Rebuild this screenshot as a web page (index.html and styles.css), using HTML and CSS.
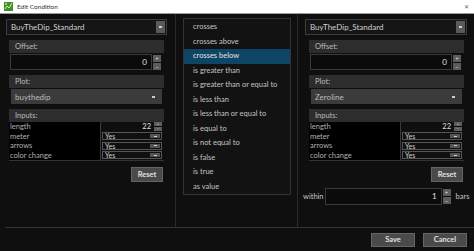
FILE: index.html
```html
<!DOCTYPE html>
<html lang="en">
<head>
    <meta charset="UTF-8">
    <title>Edit Condition</title>
    <link rel="stylesheet" href="styles.css">
</head>
<body>
    <div class="window">
        <header class="titlebar">
            <svg class="app-icon" width="9" height="9" viewBox="0 0 9 9">
                <rect width="9" height="9" fill="#3f8f2f"/>
                <path d="M1 7 L3 4 L5 6 L8 1" stroke="#d8f0a0" stroke-width="1" fill="none"/>
                <rect x="1" y="1" width="2" height="2" fill="#9fd36a"/>
            </svg>
            <span class="title">Edit Condition</span>
            <span class="close">&#x2715;</span>
        </header>

        <div class="main">
            <section class="panel panel-left">
                <div class="select top-select">
                    <span>BuyTheDip_Standard</span>
                    <span class="drop-btn"><i></i></span>
                </div>

                <div class="group">
                    <div class="group-head">Offset:</div>
                    <div class="spin-field">
                        <span class="num">0</span>
                        <div class="spin"><b>+</b><b>&minus;</b></div>
                    </div>
                </div>

                <div class="group">
                    <div class="group-head">Plot:</div>
                    <div class="select plot-select">
                        <span>buythedip</span>
                        <i class="tri"></i>
                    </div>
                </div>

                <div class="group">
                    <div class="group-head">Inputs:</div>
                    <div class="inputs">
                        <div class="lbl">length</div>
                        <div class="val"><span class="num">22</span><div class="spin mini"><b>+</b><b>&minus;</b></div></div>
                        <div class="lbl">meter</div>
                        <div class="val"><div class="yes">Yes<span class="yes-btn"><i></i></span></div></div>
                        <div class="lbl">arrows</div>
                        <div class="val"><div class="yes">Yes<span class="yes-btn"><i></i></span></div></div>
                        <div class="lbl">color change</div>
                        <div class="val"><div class="yes">Yes<span class="yes-btn"><i></i></span></div></div>
                    </div>
                </div>

                <div class="reset-row"><button class="btn">Reset</button></div>
            </section>

            <section class="panel panel-mid">
                <ul class="ops">
                    <li>crosses</li>
                    <li>crosses above</li>
                    <li class="selected">crosses below</li>
                    <li>is greater than</li>
                    <li>is greater than or equal to</li>
                    <li>is less than</li>
                    <li>is less than or equal to</li>
                    <li>is equal to</li>
                    <li>is not equal to</li>
                    <li>is false</li>
                    <li>is true</li>
                    <li>as value</li>
                </ul>
            </section>

            <section class="panel panel-right">
                <div class="select top-select">
                    <span>BuyTheDip_Standard</span>
                    <span class="drop-btn"><i></i></span>
                </div>

                <div class="group">
                    <div class="group-head">Offset:</div>
                    <div class="spin-field">
                        <span class="num">0</span>
                        <div class="spin"><b>+</b><b>&minus;</b></div>
                    </div>
                </div>

                <div class="group">
                    <div class="group-head">Plot:</div>
                    <div class="select plot-select">
                        <span>Zeroline</span>
                        <i class="tri"></i>
                    </div>
                </div>

                <div class="group">
                    <div class="group-head">Inputs:</div>
                    <div class="inputs">
                        <div class="lbl">length</div>
                        <div class="val"><span class="num">22</span><div class="spin mini"><b>+</b><b>&minus;</b></div></div>
                        <div class="lbl">meter</div>
                        <div class="val"><div class="yes">Yes<span class="yes-btn"><i></i></span></div></div>
                        <div class="lbl">arrows</div>
                        <div class="val"><div class="yes">Yes<span class="yes-btn"><i></i></span></div></div>
                        <div class="lbl">color change</div>
                        <div class="val"><div class="yes">Yes<span class="yes-btn"><i></i></span></div></div>
                    </div>
                </div>

                <div class="reset-row"><button class="btn">Reset</button></div>

                <div class="within">
                    <span>within</span>
                    <div class="spin-field within-field">
                        <span class="num">1</span>
                        <div class="spin"><b>+</b><b>&minus;</b></div>
                    </div>
                    <span>bars</span>
                </div>
            </section>
        </div>

        <footer class="bottom">
            <button class="btn big">Save</button>
            <button class="btn big">Cancel</button>
        </footer>
    </div>
</body>
</html>
```

FILE: styles.css
```css
* {
    box-sizing: border-box;
    margin: 0;
    padding: 0;
}

body {
    font-family: Lato, 'Open Sans', sans-serif;
    background: #0f0f0f;
    color: #c8c8c8;
}

.window {
    width: 474px;
    height: 251px;
    background: #0f0f0f;
    overflow: hidden;
}

/* title bar */
.titlebar {
    height: 14px;
    background: #fff;
    border-bottom: 1px solid #9a9a9a;
    display: flex;
    align-items: center;
    padding-left: 4px;
    color: #333;
    font-size: 6.5px;
}

.app-icon {
    margin-right: 4px;
}

.close {
    margin-left: auto;
    margin-right: 5px;
    font-size: 6px;
    color: #666;
}

/* columns */
.main {
    display: flex;
    height: 213px;
    padding-left: 5px;
}

.panel {
    display: flex;
    flex-direction: column;
}

.panel-left {
    width: 171px;
    border-right: 1px solid #2a2a2a;
    padding-top: 5px;
}

.panel-mid {
    width: 122px;
    border-right: 1px solid #2a2a2a;
    padding: 4px 6px 0 7px;
}

.panel-right {
    flex: 1;
    padding: 5px 0 0 7px;
}

/* selects */
.select {
    display: flex;
    align-items: center;
    font-size: 8px;
}

.top-select {
    width: 161px;
    height: 16px;
    margin-left: 1px;
    background: #151515;
    border: 1px solid #3c3c3c;
    padding: 0 1px 0 4px;
    color: #d0d0d0;
}

.panel-right .top-select {
    margin-left: 0;
    width: 162px;
}

.drop-btn {
    margin-left: auto;
    width: 9px;
    height: 12px;
    background: #5a5a5a;
    display: flex;
    align-items: center;
    justify-content: center;
}

.drop-btn i, .yes-btn i, .tri {
    display: block;
    width: 3px;
    height: 2px;
    background: #ccc;
}

.plot-select {
    margin: 1px 2px 0 2px;
    height: 15px;
    background: #3b3b3b;
    padding: 0 7px 0 4px;
    color: #bdbdbd;
}

.tri {
    margin-left: auto;
}

/* groups */
.group {
    margin: 5px 0 0 4px;
    width: 155px;
}

.group-head {
    height: 13px;
    background: #2d2d2d;
    padding-left: 6px;
    font-size: 7.5px;
    line-height: 13px;
    color: #bcbcbc;
}

.spin-field {
    display: flex;
    align-items: center;
    height: 16px;
    margin: 1px 3px 0 1px;
}

.spin-field .num {
    flex: 1;
    height: 16px;
    background: #0b0b0b;
    border: 1px solid #3a3a3a;
    text-align: right;
    padding-right: 4px;
    font-size: 8px;
    line-height: 14px;
    color: #e0e0e0;
}

.spin {
    display: flex;
    flex-direction: column;
    gap: 1px;
    margin-left: 1px;
}

.spin b {
    width: 8px;
    height: 7px;
    background: #5c5c5c;
    color: #ddd;
    font-size: 6px;
    line-height: 7px;
    text-align: center;
    font-weight: normal;
}

.spin.mini b {
    height: 4px;
    font-size: 4px;
    line-height: 4px;
}

/* inputs table */
.inputs {
    display: grid;
    grid-template-columns: 91px 1fr;
    grid-auto-rows: 9.5px;
    border-bottom: 1px solid #333;
    font-size: 7.5px;
}

.lbl {
    background: #000;
    padding-left: 1px;
    line-height: 9.5px;
    color: #b0b0b0;
}

.val {
    border-left: 1px solid #3a3a3a;
    display: flex;
    align-items: center;
    justify-content: flex-end;
    padding-right: 2px;
}

.val .num {
    margin-right: 2px;
    color: #e0e0e0;
}

.yes {
    width: 60px;
    height: 8px;
    border: 1px solid #555;
    background: #101010;
    display: flex;
    align-items: center;
    padding-left: 2px;
    font-size: 7px;
    color: #d0d0d0;
}

.yes-btn {
    margin-left: auto;
    width: 10px;
    height: 4px;
    margin-right: 1px;
    background: #555;
    display: flex;
    align-items: center;
    justify-content: center;
}

.yes-btn i {
    width: 3px;
    height: 1px;
}

/* buttons */
.reset-row {
    display: flex;
    justify-content: flex-end;
    width: 158px;
    margin-top: 6px;
}

.btn {
    font-family: Lato, 'Open Sans', sans-serif;
    background: #4a4a4a;
    border: 1px solid #646464;
    color: #e0e0e0;
    font-weight: bold;
    font-size: 7.5px;
    width: 32px;
    height: 15px;
}

/* operator list */
.ops {
    list-style: none;
    border: 1px solid #333;
    background: #121212;
    height: 177px;
    padding-top: 1px;
}

.ops li {
    height: 14.5px;
    line-height: 14.5px;
    padding-left: 9px;
    font-size: 7.5px;
    color: #c4c4c4;
}

.ops li.selected {
    background: #0e4564;
    color: #e4e4e4;
}

/* within row */
.within {
    display: flex;
    align-items: center;
    margin: 6px 0 0 -2px;
    font-size: 7.5px;
}

.within-field {
    width: 126px;
    margin: 0 5px 0 1px;
    height: 17px;
}

.within-field .num {
    height: 17px;
    line-height: 15px;
}

/* bottom bar */
.bottom {
    border-top: 1px solid #333;
    margin-left: 5px;
    height: 24px;
    display: flex;
    justify-content: flex-end;
    align-items: center;
    gap: 8px;
    padding: 0 7px 0 0;
}

.btn.big {
    width: 44px;
    height: 14px;
    font-size: 7.5px;
}
```
